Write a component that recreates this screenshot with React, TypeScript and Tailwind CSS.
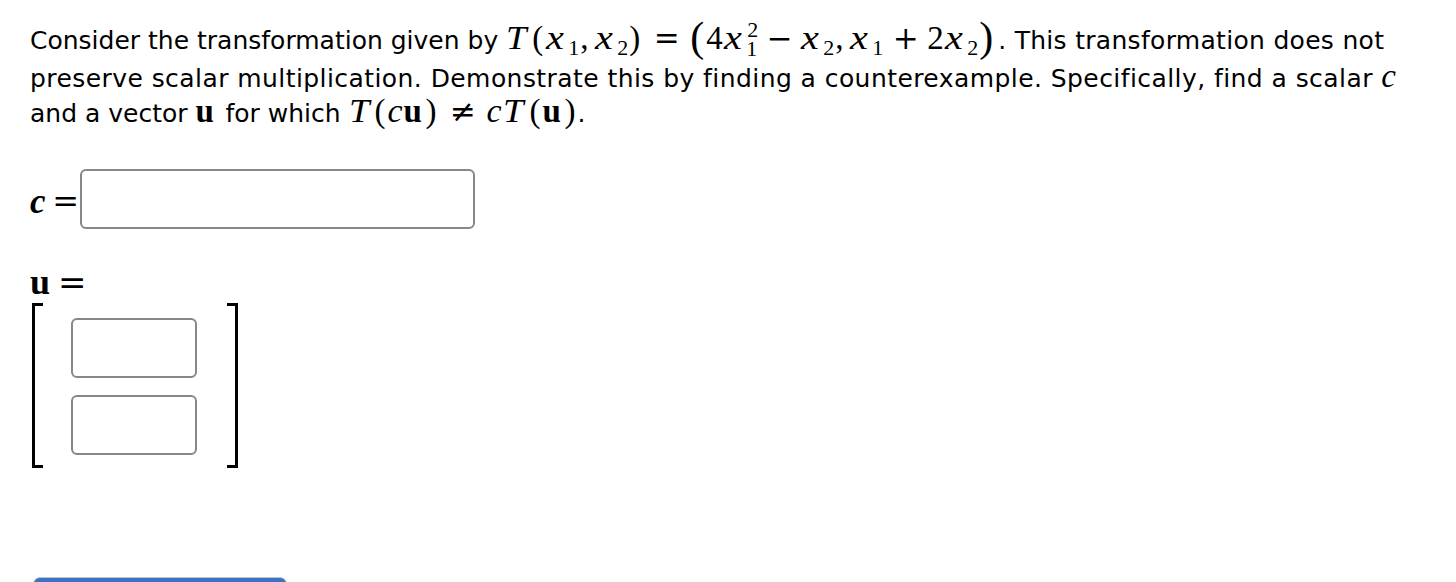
import React from "react";

const mf = "font-['Liberation_Serif',serif] leading-[0] whitespace-nowrap";
const opf = "font-['DejaVu_Serif',serif] leading-[0] whitespace-nowrap text-center not-italic";

function Field({ w, h }: { w: string; h: string }) {
  return <div className={`${w} ${h} rounded-[6px] border-2 border-[#878787] bg-white`} />;
}

function X() {
  return (
    <span className={`${mf} inline-block w-[21px]`}>
      <span className="inline-block origin-left scale-x-[1.22] italic text-[33px]">x</span>
    </span>
  );
}
function T({ w }: { w: string }) {
  return (
    <span className={`${mf} inline-block ${w}`}>
      <span className="inline-block origin-left scale-x-[1.08] italic text-[34px]">T</span>
    </span>
  );
}
function Sub({ c }: { c: string }) {
  return (
    <span className={`${mf} inline-block w-[13px] text-[22px] relative top-[6px] left-[1px]`}>{c}</span>
  );
}

function SupSub({ sup, sub }: { sup: string; sub: string }) {
  return (
    <span className="relative inline-block w-[13px] h-0 align-baseline">
      <span className={`${mf} absolute left-[2px] top-[-30px] text-[22px] leading-none`}>{sup}</span>
      <span className={`${mf} absolute left-[1px] top-[-11px] text-[22px] leading-none`}>{sub}</span>
    </span>
  );
}

export default function App() {
  return (
    <div className="bg-white min-h-[582px] text-black font-['DejaVu_Sans',sans-serif] text-[25px]">
      <div className="pl-[30px] pt-[23px]">
        <div className="h-[38px] leading-[35px] whitespace-nowrap">
          Consider the transformation given by{" "}
          <T w="w-[26px]" />
          <span className={`${mf} inline-block w-[14px] text-[33px]`}>(</span>
          <X />
          <Sub c="1" />
          <span className={`${mf} inline-block w-[15px] text-[33px]`}>,</span>
          <X />
          <Sub c="2" />
          <span className={`${mf} inline-block w-[14px] text-[33px]`}>)</span>
          <span className={`${opf} inline-block w-[47px] text-[31px]`}>=</span>
          <span className={`${mf} inline-block w-[16px] text-[42px] relative top-[2px]`}>(</span>
          <span className={`${mf} inline-block w-[18px] text-[33px]`}>4</span>
          <X />
          <SupSub sup="2" sub="1" />
          <span className={`${opf} inline-block w-[43px] text-[31px]`}>−</span>
          <X />
          <Sub c="2" />
          <span className={`${mf} inline-block w-[15px] text-[33px]`}>,</span>
          <X />
          <Sub c="1" />
          <span className={`${opf} inline-block w-[43px] text-[31px]`}>+</span>
          <span className={`${mf} inline-block w-[18px] text-[33px]`}>2</span>
          <X />
          <Sub c="2" />
          <span className={`${mf} inline-block w-[19px] text-[42px] relative top-[2px]`}>)</span>
          <span className="tracking-[0.3px]">. This transformation does not</span>
        </div>
        <div className="h-[35px] leading-[35px] whitespace-nowrap tracking-[0.43px]">
          preserve scalar multiplication. Demonstrate this by finding a counterexample. Specifically, find a scalar{" "}
          <span className={`${mf} italic text-[33px] tracking-normal`}>c</span>
        </div>
        <div className="h-[35px] leading-[35px] whitespace-nowrap">
          and a vector{" "}
          <span className={`${mf} inline-block w-[22px] font-bold text-[33px]`}>u</span> for which{" "}
          <T w="w-[26px]" />
          <span className={`${mf} inline-block w-[13px] text-[33px]`}>(</span>
          <span className={`${mf} inline-block w-[16px] italic text-[34px]`}>c</span>
          <span className={`${mf} inline-block w-[22px] font-bold text-[33px]`}>u</span>
          <span className={`${mf} inline-block w-[14px] text-[33px]`}>)</span>
          <span className={`${opf} inline-block w-[47px] text-[31px]`}>≠</span>
          <span className={`${mf} inline-block w-[16px] italic text-[34px]`}>c</span>
          <T w="w-[27px]" />
          <span className={`${mf} inline-block w-[13px] text-[33px]`}>(</span>
          <span className={`${mf} inline-block w-[22px] font-bold text-[33px]`}>u</span>
          <span className={`${mf} inline-block w-[13px] text-[33px]`}>)</span>.
        </div>

        <div className="mt-[38px] flex items-center">
          <span className="font-['Liberation_Serif',serif] italic font-bold text-[35px] leading-none pt-[4px] w-[22px]">c</span>
          <span className="font-['DejaVu_Serif',serif] text-[32px] leading-none pt-[3px] w-[28px] text-right pr-[1px]">=</span>
          <Field w="w-[395px]" h="h-[60px]" />
        </div>

        <div className="mt-[42px] flex items-center h-[22px]">
          <span className="font-['Liberation_Serif',serif] font-bold text-[36px] leading-none w-[28px]">u</span>
          <span className="font-['DejaVu_Serif',serif] text-[34px] leading-none w-[28px] text-center">=</span>
        </div>

        <div className="mt-[10px] ml-[2px] flex">
          <div className="w-[11px] h-[165px] border-l-[3px] border-t-[3px] border-b-[3px] border-black" />
          <div className="ml-[28px] mr-[30px] pt-[15px] flex flex-col gap-[17px]">
            <Field w="w-[126px]" h="h-[60px]" />
            <Field w="w-[126px]" h="h-[60px]" />
          </div>
          <div className="w-[11px] h-[165px] border-r-[3px] border-t-[3px] border-b-[3px] border-black" />
        </div>

        <div className="mt-[109px] ml-[3px] w-[254px] h-[40px] rounded-t-[7px] border border-[#c4c4c4] bg-[#3a72c9]" />
      </div>
    </div>
  );
}
